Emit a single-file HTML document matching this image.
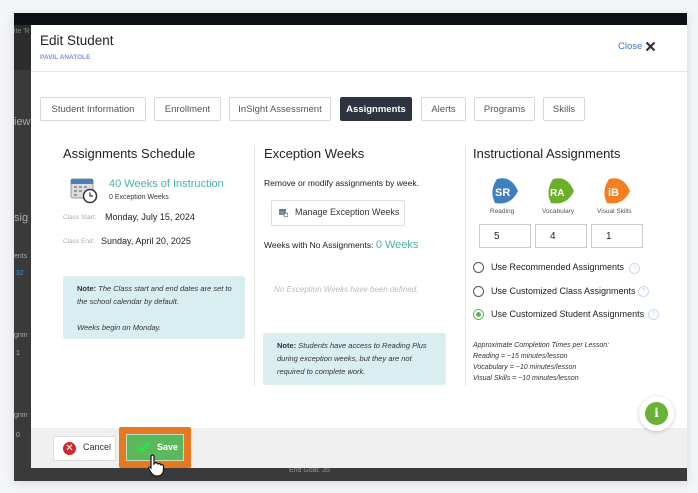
<!DOCTYPE html>
<html><head><meta charset="utf-8"><style>
*{margin:0;padding:0;box-sizing:border-box}
body{width:698px;height:493px;background:#f3f5f8;font-family:"Liberation Sans","DejaVu Sans",sans-serif;position:relative;overflow:hidden;color:#222}
.a{position:absolute;white-space:nowrap}
.tab{position:absolute;top:97px;height:24px;border:1px solid #d8d8d8;border-radius:2px;font-size:9.5px;color:#555;display:flex;align-items:center;justify-content:center;background:#fff}
.h{font-size:13px;color:#222}
.note{position:absolute;background:#d9eef1;border-radius:3px;font-size:7.5px;font-style:italic;line-height:13px;color:#333;padding:6px 14px;white-space:nowrap}
.inp{position:absolute;top:224px;width:52px;height:24px;border:1px solid #ccc;font-size:10px;padding:6px 14px}
.rad{position:absolute;left:473px;width:11px;height:11px;border:1px solid #555;border-radius:50%}
.q{position:absolute;width:11px;height:11px;border:1px solid #c5d8f0;border-radius:50%;font-size:7px;color:#c5d8f0;text-align:center;line-height:10px}
.rt{position:absolute;left:491px;font-size:9px;color:#222}
</style></head><body>
<div class="a" style="left:14px;top:13px;width:673px;height:468px;background:#3a3a3a;box-shadow:0 2px 10px rgba(0,0,0,.12)"></div>
<div class="a" style="left:14px;top:13px;width:673px;height:12px;background:#0d1014"></div>
<div class="a" style="left:14px;top:25px;width:17px;height:45px;background:#2c2c2c"></div>
<div class="a" style="left:14px;top:28px;font-size:7px;color:#888">ite 'R</div>
<div class="a" style="left:14px;top:116px;font-size:11px;color:#aaa">iew</div>
<div class="a" style="left:14px;top:212px;font-size:11px;color:#aaa">sig</div>
<div class="a" style="left:14px;top:253px;font-size:7px;color:#aaa">ents</div>
<div class="a" style="left:16px;top:270px;font-size:7px;color:#4a90d0">32</div>
<div class="a" style="left:14px;top:332px;font-size:7px;color:#aaa">gnm</div>
<div class="a" style="left:16px;top:350px;font-size:7px;color:#aaa">1</div>
<div class="a" style="left:14px;top:412px;font-size:7px;color:#aaa">gnm</div>
<div class="a" style="left:16px;top:432px;font-size:7px;color:#aaa">0</div>
<div class="a" style="left:289px;top:467px;font-size:7px;color:#999">End Goal: 35</div>

<div class="a" style="left:31px;top:25px;width:656px;height:443px;background:#fff"></div>
<div class="a" style="left:40px;top:33px;font-size:13.5px;color:#222">Edit Student</div>
<div class="a" style="left:40px;top:54px;font-size:6.5px;color:#7b97d6;font-weight:bold">PAVIL ANATOLE</div>
<div class="a" style="left:618px;top:41px;font-size:9.5px;color:#3a77c0">Close</div>
<svg class="a" style="left:645px;top:41px" width="11" height="11"><path d="M1.5 1.5L9.5 9.5M9.5 1.5L1.5 9.5" stroke="#333" stroke-width="2.2"/></svg>
<div class="a" style="left:31px;top:71px;width:656px;height:1px;background:#e6e6e6"></div>

<div class="tab" style="left:40px;width:106px">Student Information</div>
<div class="tab" style="left:154px;width:67px">Enrollment</div>
<div class="tab" style="left:229px;width:102px">InSight Assessment</div>
<div class="tab" style="left:340px;width:72px;background:#2d3440;border-color:#2d3440;color:#fff;font-weight:bold">Assignments</div>
<div class="tab" style="left:421px;width:45px">Alerts</div>
<div class="tab" style="left:474px;width:61px">Programs</div>
<div class="tab" style="left:543px;width:42px">Skills</div>

<div class="a" style="left:254px;top:145px;width:1px;height:241px;background:#e4e4e4"></div>
<div class="a" style="left:465px;top:145px;width:1px;height:241px;background:#e4e4e4"></div>

<div class="a h" style="left:63px;top:146px">Assignments Schedule</div>
<svg class="a" style="left:70px;top:176px" width="28" height="28"><rect x="1" y="3" width="22" height="19" rx="2" fill="#ddd" stroke="#999"/><rect x="1" y="3" width="22" height="5" fill="#4a7ec0"/><g fill="#999"><rect x="4" y="10" width="3" height="2"/><rect x="9" y="10" width="3" height="2"/><rect x="14" y="10" width="3" height="2"/><rect x="4" y="14" width="3" height="2"/><rect x="9" y="14" width="3" height="2"/><rect x="4" y="18" width="3" height="2"/></g><circle cx="20" cy="20" r="6.5" fill="#fff" stroke="#333" stroke-width="1.5"/><path d="M20 16.5V20H23" stroke="#333" fill="none" stroke-width="1.2"/></svg>
<div class="a" style="left:109px;top:178px;font-size:11px;color:#4ab0b0">40 Weeks of Instruction</div>
<div class="a" style="left:109px;top:194px;font-size:7px;color:#333">0 Exception Weeks</div>
<div class="a" style="left:63px;top:214px;font-size:6.5px;color:#aaa">Class Start:</div>
<div class="a" style="left:105px;top:212px;font-size:9px;color:#222">Monday, July 15, 2024</div>
<div class="a" style="left:63px;top:238px;font-size:6.5px;color:#aaa">Class End:</div>
<div class="a" style="left:101px;top:236px;font-size:9px;color:#222">Sunday, April 20, 2025</div>
<div class="note" style="left:63px;top:276px;width:182px;height:63px"><b style="font-style:normal">Note:</b> The Class start and end dates are set to<br>the school calendar by default.<br><br>Weeks begin on Monday.</div>

<div class="a h" style="left:264px;top:146px">Exception Weeks</div>
<div class="a" style="left:264px;top:178px;font-size:8.5px">Remove or modify assignments by week.</div>
<div class="a" style="left:271px;top:200px;width:134px;height:26px;border:1px solid #ddd;border-radius:2px"></div>
<svg class="a" style="left:279px;top:208px" width="9" height="9"><rect x="0" y="1" width="7" height="6" fill="#889" /><rect x="0" y="1" width="7" height="2" fill="#4a7ec0"/><circle cx="7" cy="7" r="2" fill="#fff" stroke="#555" stroke-width=".8"/></svg>
<div class="a" style="left:295px;top:207px;font-size:9px;color:#333">Manage Exception Weeks</div>
<div class="a" style="left:264px;top:239px;font-size:8.5px">Weeks with No Assignments: <span style="color:#4ab0b0;font-size:11px">0 Weeks</span></div>
<div class="a" style="left:274px;top:285px;font-size:8px;color:#bbb;font-style:italic">No Exception Weeks have been defined.</div>
<div class="note" style="left:263px;top:333px;width:183px;height:52px;padding-top:6px"><b style="font-style:normal">Note:</b> Students have access to Reading Plus<br>during exception weeks, but they are not<br>required to complete work.</div>

<div class="a h" style="left:473px;top:146px">Instructional Assignments</div>
<svg class="a" style="left:489px;top:176px" width="30" height="30"><path d="M8 3Q22 -1 29 15Q22 30 6 27Q0 15 8 3Z" fill="#3f7fc0"/><text x="6" y="20" font-size="11" font-weight="bold" fill="#fff" font-family="Liberation Sans">SR</text></svg>
<svg class="a" style="left:545px;top:176px" width="30" height="30"><path d="M8 3Q22 -1 29 15Q22 30 6 27Q0 15 8 3Z" fill="#6ab02a"/><text x="5" y="20" font-size="10" font-weight="bold" fill="#fff" font-family="Liberation Sans">RA</text></svg>
<svg class="a" style="left:601px;top:176px" width="30" height="30"><path d="M8 3Q22 -1 29 15Q22 30 6 27Q0 15 8 3Z" fill="#f57e20"/><text x="7" y="20" font-size="11" font-weight="bold" fill="#fff" font-family="Liberation Sans">iB</text></svg>
<div class="a" style="left:490px;top:208px;font-size:6.5px;color:#555">Reading</div>
<div class="a" style="left:542px;top:208px;font-size:6.5px;color:#555">Vocabulary</div>
<div class="a" style="left:597px;top:208px;font-size:6.5px;color:#555">Visual Skills</div>
<div class="inp" style="left:479px">5</div>
<div class="inp" style="left:535px">4</div>
<div class="inp" style="left:591px">1</div>
<div class="rad" style="top:262px"></div><div class="rt" style="top:262px">Use Recommended Assignments</div><div class="q" style="left:629px;top:263px">?</div>
<div class="rad" style="top:286px"></div><div class="rt" style="top:286px">Use Customized Class Assignments</div><div class="q" style="left:638px;top:286px">?</div>
<div class="rad" style="top:309px;border-color:#5cb85c"><div style="position:absolute;left:2px;top:2px;width:5px;height:5px;border-radius:50%;background:#5cb85c"></div></div><div class="rt" style="top:309px">Use Customized Student Assignments</div><div class="q" style="left:648px;top:309px">?</div>
<div class="a" style="left:473px;top:340px;font-size:7px;font-style:italic;line-height:11px;color:#333">Approximate Completion Times per Lesson:<br>Reading = ~15 minutes/lesson<br>Vocabulary = ~10 minutes/lesson<br>Visual Skills = ~10 minutes/lesson</div>

<div class="a" style="left:31px;top:428px;width:656px;height:40px;background:#f0f0f0"></div>
<div class="a" style="left:639px;top:396px;width:35px;height:35px;border-radius:50%;background:#fff;box-shadow:0 1px 4px rgba(0,0,0,.2)"></div>
<div class="a" style="left:645px;top:402px;width:23px;height:23px;border-radius:50%;background:#6ab235;color:#fff;font-weight:bold;font-size:12px;text-align:center;line-height:23px;font-family:'DejaVu Serif',serif">i</div>

<div class="a" style="left:53px;top:436px;width:63px;height:25px;background:#fff;border:1px solid #ddd;border-radius:2px"></div>
<div class="a" style="left:63px;top:442px;width:13px;height:13px;border-radius:50%;background:#d0282e;color:#fff;font-size:10px;font-weight:bold;text-align:center;line-height:13px">✕</div>
<div class="a" style="left:83px;top:442px;font-size:9px;color:#333">Cancel</div>
<div class="a" style="left:119px;top:427px;width:72px;height:41px;background:#e87722;border-radius:2px"></div>
<div class="a" style="left:126px;top:434px;width:58px;height:27px;background:#5cb85c;border:1px solid #bfe0bf"></div>
<svg class="a" style="left:137px;top:440px;z-index:2" width="14" height="13"><path d="M1.5 7L5 10.5L12.5 2" stroke="#22e844" stroke-width="3" fill="none"/></svg>
<div class="a" style="left:157px;top:442px;font-size:9px;color:#fff;font-weight:bold">Save</div>
<svg class="a" style="left:146px;top:454px;z-index:3" width="20" height="24"><path d="M5 2Q7 0 8 2V10L9 9Q11 8 12 10Q14 9 15 11Q17 10 17.5 12V17Q16 22 12 22H9Q6 21 3 15Q2 13 4 13L5 14Z" fill="#fff" stroke="#111" stroke-width="1.2"/></svg>
</body></html>
